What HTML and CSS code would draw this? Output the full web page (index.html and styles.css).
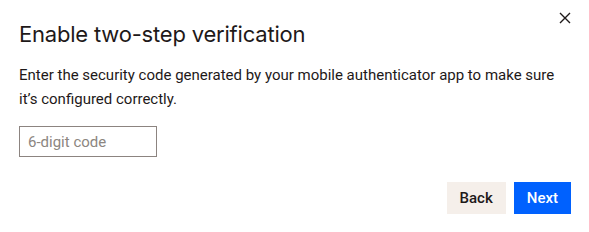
FILE: index.html
```html
<!DOCTYPE html>
<html lang="en">
<head>
    <meta charset="UTF-8">
    <title>Enable two-step verification</title>
    <link rel="stylesheet" href="styles.css">
</head>
<body>
    <div class="dialog">
        <div class="dialog-header">
            <h1 class="dialog-title">Enable two-step verification</h1>
            <button class="close-btn" aria-label="Close">
                <svg width="12" height="12" viewBox="0 0 12 12">
                    <path d="M1 1L11 11M11 1L1 11" stroke="#1e1919" stroke-width="1.4" fill="none"/>
                </svg>
            </button>
        </div>
        <p class="dialog-text">Enter the security code generated by your mobile authenticator app to make sure it’s configured correctly.</p>
        <input class="code-input" type="text" placeholder="6-digit code">
        <div class="dialog-footer">
            <button class="btn btn-secondary">Back</button>
            <button class="btn btn-primary">Next</button>
        </div>
    </div>
</body>
</html>
```

FILE: styles.css
```css
body {
    margin: 0;
    background-color: #fff;
    color: #1e1919;
    font-family: Roboto, "Liberation Sans", sans-serif;
}

.dialog {
    padding: 12px 18px 18px 19px;
}

.dialog-header {
    display: flex;
    justify-content: space-between;
    align-items: flex-start;
}

.dialog-title {
    margin: 8px 0 0 0;
    font-family: Inter, sans-serif;
    font-size: 22px;
    font-weight: 400;
    line-height: 28px;
    letter-spacing: -0.2px;
}

.close-btn {
    background: none;
    border: none;
    padding: 0;
    margin: 0;
    width: 12px;
    height: 12px;
    cursor: pointer;
}

.close-btn svg {
    display: block;
}

.dialog-text {
    margin: 15px 0 0 0;
    font-size: 15px;
    line-height: 24px;
    color: #1e1919;
}

.code-input {
    display: block;
    box-sizing: border-box;
    width: 138px;
    height: 31px;
    margin-top: 15px;
    padding: 0 8px;
    border: 1px solid #8c8480;
    font-family: Roboto, sans-serif;
    font-size: 15px;
    color: #1e1919;
    outline: none;
}

.code-input::placeholder {
    color: #8c8681;
}

.dialog-footer {
    display: flex;
    justify-content: flex-end;
    gap: 8px;
    margin-top: 25px;
}

.btn {
    height: 32px;
    border: none;
    padding: 0 13px;
    font-family: Roboto, sans-serif;
    font-size: 15px;
    font-weight: 500;
    cursor: pointer;
}

.btn-secondary {
    background-color: #f5efea;
    color: #1e1919;
}

.btn-primary {
    background-color: #0061fe;
    color: #fff;
}
```
